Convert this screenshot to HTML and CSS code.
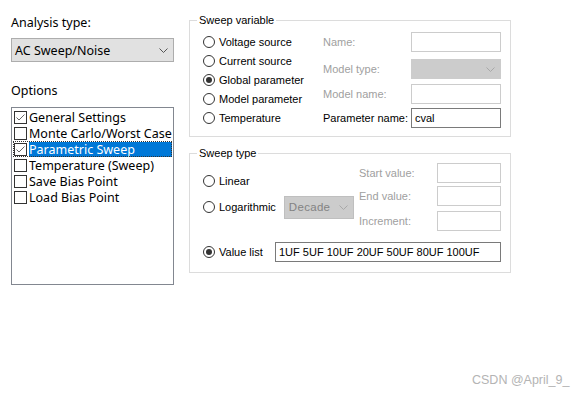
FILE: index.html
```html
<!DOCTYPE html>
<html lang="en">

<head>
    <meta charset="UTF-8">
    <title>Simulation Settings</title>
    <link rel="stylesheet" href="styles.css">
</head>

<body>
    <div class="dialog">
        <div class="left">
            <div class="caption">Analysis type:</div>
            <div class="combo">
                <span>AC Sweep/Noise</span>
                <svg class="chev" width="9" height="5" viewBox="0 0 9 5"><path d="M0.5 0.5 L4.5 4.5 L8.5 0.5" fill="none" stroke="#555" stroke-width="1"/></svg>
            </div>
            <div class="caption options">Options</div>
            <ul class="listbox">
                <li><span class="check on"><svg width="11" height="11" viewBox="0 0 11 11"><path d="M1.5 5.5 L4 8 L9.5 2.5" fill="none" stroke="#666" stroke-width="1"/></svg></span><span class="item">General Settings</span></li>
                <li><span class="check"></span><span class="item">Monte Carlo/Worst Case</span></li>
                <li class="selected"><span class="check on"><svg width="11" height="11" viewBox="0 0 11 11"><path d="M1.5 5.5 L4 8 L9.5 2.5" fill="none" stroke="#666" stroke-width="1"/></svg></span><span class="item">Parametric Sweep</span></li>
                <li><span class="check"></span><span class="item">Temperature (Sweep)</span></li>
                <li><span class="check"></span><span class="item">Save Bias Point</span></li>
                <li><span class="check"></span><span class="item">Load Bias Point</span></li>
            </ul>
        </div>

        <div class="right">
            <fieldset class="group">
                <legend>Sweep variable</legend>
                <div class="sv">
                    <div class="radios">
                        <div class="radio"><span class="dot"></span>Voltage source</div>
                        <div class="radio"><span class="dot"></span>Current source</div>
                        <div class="radio"><span class="dot on"></span>Global parameter</div>
                        <div class="radio"><span class="dot"></span>Model parameter</div>
                        <div class="radio"><span class="dot"></span>Temperature</div>
                    </div>
                    <div class="fields sv-fields">
                        <span class="lbl off">Name:</span>
                        <span class="edit off"></span>
                        <span class="lbl off">Model type:</span>
                        <span class="dcombo">
                            <span></span>
                            <svg class="chev" width="9" height="5" viewBox="0 0 9 5"><path d="M0.5 0.5 L4.5 4.5 L8.5 0.5" fill="none" stroke="#a8a8a8" stroke-width="1"/></svg>
                        </span>
                        <span class="lbl off">Model name:</span>
                        <span class="edit off"></span>
                        <span class="lbl">Parameter name:</span>
                        <span class="edit">cval</span>
                    </div>
                </div>
            </fieldset>

            <fieldset class="group second">
                <legend>Sweep type</legend>
                <div class="st-top">
                    <div class="st-left">
                        <div class="radio linear"><span class="dot"></span>Linear</div>
                        <div class="radio log">
                            <span class="dot"></span>Logarithmic
                            <span class="dcombo decade">
                                <span>Decade</span>
                                <svg class="chev" width="9" height="5" viewBox="0 0 9 5"><path d="M0.5 0.5 L4.5 4.5 L8.5 0.5" fill="none" stroke="#a8a8a8" stroke-width="1"/></svg>
                            </span>
                        </div>
                    </div>
                    <div class="fields st-fields">
                        <span class="lbl off">Start value:</span>
                        <span class="edit off"></span>
                        <span class="lbl off">End value:</span>
                        <span class="edit off"></span>
                        <span class="lbl off">Increment:</span>
                        <span class="edit off"></span>
                    </div>
                </div>
                <div class="radio valuelist">
                    <span class="dot on"></span>Value list
                    <span class="edit wide">1UF 5UF 10UF 20UF 50UF 80UF 100UF</span>
                </div>
            </fieldset>
        </div>
    </div>

    <div class="watermark">CSDN @April_9_</div>
</body>

</html>
```

FILE: styles.css
```css
* {
    padding: 0;
    margin: 0;
    box-sizing: border-box;
}

body {
    width: 585px;
    height: 395px;
    position: relative;
    overflow: hidden;
    background: #fff;
    color: #000;
    font-family: "Liberation Sans", Arial, sans-serif;
    font-size: 11px;
}

.dialog {
    display: flex;
    padding: 14px 0 0 11px;
}

/* left column */

.left {
    width: 163px;
    font-family: "Noto Sans", "Noto Sans CJK SC", sans-serif;
    font-size: 12.5px;
}

.caption {
    line-height: 17px;
}

.options {
    margin-top: 20px;
}

.combo {
    margin-top: 7px;
    height: 24px;
    border: 1px solid #adadad;
    background: #e1e1e1;
    display: flex;
    align-items: center;
    justify-content: space-between;
    padding: 0 5px 0 3px;
}

.chev {
    display: block;
    flex: none;
}

.listbox {
    list-style: none;
    margin-top: 8px;
    height: 178px;
    border: 1px solid #828790;
    padding: 1px 1px 0 1px;
    overflow: hidden;
}

.listbox li {
    display: flex;
    align-items: center;
    height: 16px;
    padding-left: 1px;
    white-space: nowrap;
}

.check {
    flex: none;
    width: 13px;
    height: 13px;
    border: 1px solid #333;
    background: #fff;
    margin-right: 2px;
}

.check svg {
    display: block;
}

.item {
    flex: 1;
    line-height: 15px;
    overflow: hidden;
}

.listbox .selected {
    outline: 1px dotted #333;
    outline-offset: -1px;
}

.selected .item {
    background: #0078d7;
    color: #fff;
}

/* right column */

.right {
    margin-left: 15px;
    width: 322px;
}

.group {
    border: 1px solid #dcdcdc;
    padding: 5px 9px 8px 7px;
}

.group legend {
    padding: 0 2px;
    line-height: 13px;
}

.second {
    margin-top: 10px;
    padding: 3px 9px 10px 7px;
}

.sv {
    display: flex;
    margin-left: 6px;
}

.radios {
    width: 120px;
}

.radio {
    display: flex;
    align-items: center;
    height: 19px;
    white-space: nowrap;
}

.dot {
    flex: none;
    position: relative;
    width: 12px;
    height: 12px;
    border: 1px solid #333;
    border-radius: 50%;
    background: #fff;
    margin-right: 4px;
}

.dot.on::after {
    content: "";
    position: absolute;
    left: 2px;
    top: 2px;
    width: 6px;
    height: 6px;
    border-radius: 50%;
    background: #333;
}

.fields {
    display: grid;
}

.sv-fields {
    grid-template-columns: 88px 90px;
    grid-template-rows: 27px 25px 24px 20px;
}

.lbl {
    line-height: 20px;
    white-space: nowrap;
}

.lbl.off {
    color: #a0a0a0;
}

.edit {
    height: 20px;
    border: 1px solid #7a7a7a;
    background: #fff;
    padding-left: 3px;
    line-height: 18px;
    white-space: nowrap;
}

.edit.off {
    border-color: #cccccc;
}

.dcombo {
    height: 20px;
    border: 1px solid #cccccc;
    background: #cccccc;
    display: flex;
    align-items: center;
    justify-content: space-between;
    padding: 0 5px 0 4px;
    color: #838383;
}

/* sweep type */

.st-top {
    display: flex;
    margin-left: 6px;
}

.st-left {
    width: 156px;
}

.linear {
    margin-top: 8px;
}

.log {
    margin-top: 6px;
    height: 22px;
}

.decade {
    width: 70px;
    height: 23px;
    margin-left: 8px;
    border-color: #bfbfbf;
    font-size: 11.5px;
    letter-spacing: 0.3px;
}

.st-fields {
    grid-template-columns: 78px 64px;
    grid-template-rows: 23px 25px 20px;
}

.valuelist {
    margin: 11px 0 0 6px;
    height: 20px;
}

.valuelist .edit {
    margin-left: auto;
    width: 226px;
    padding-left: 3px;
}

.watermark {
    position: absolute;
    left: 472px;
    top: 373px;
    font-family: "Liberation Sans", Arial, sans-serif;
    font-size: 12.5px;
    color: #b4b4b4;
}
```
